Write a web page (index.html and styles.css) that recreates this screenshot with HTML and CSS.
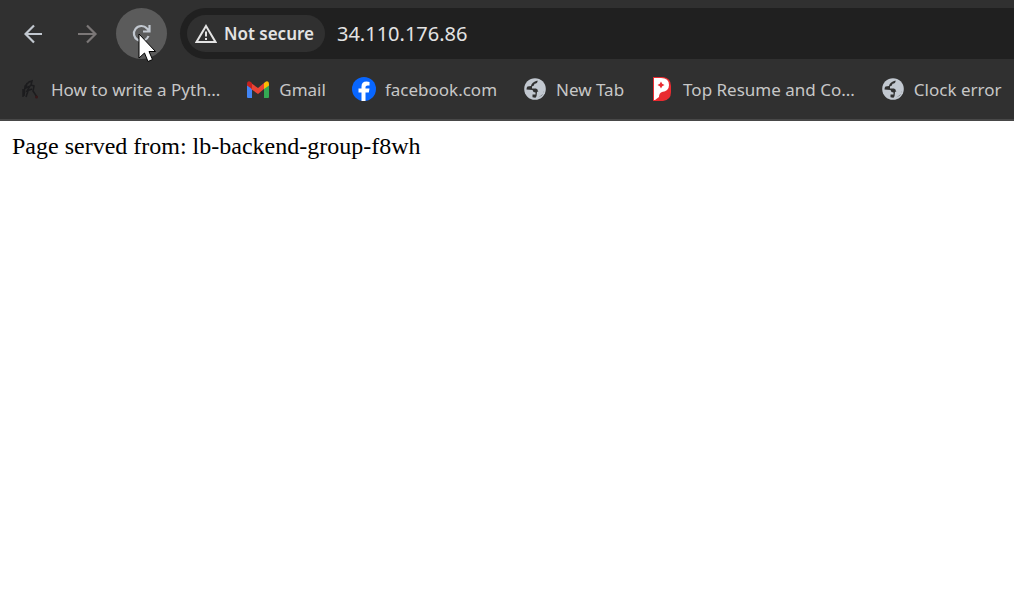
FILE: index.html
```html
<!DOCTYPE html>
<html lang="en">
<head>
    <meta charset="UTF-8">
    <meta name="viewport" content="width=device-width, initial-scale=1.0">
    <title>34.110.176.86</title>
    <link rel="stylesheet" href="styles.css">
</head>
<body>
    <header class="chrome">
        <div class="toolbar">
            <button type="button" class="nav-btn" aria-label="Back">
                <svg viewBox="0 0 20 20"><path d="M18 10H2M10 1.5L1.500 10L10 18.5"/></svg>
            </button>
            <button type="button" class="nav-btn nav-btn-muted" aria-label="Forward">
                <svg viewBox="0 0 20 20"><path d="M0 10H17M9 1.5L17.500 10L9 18.5"/></svg>
            </button>
            <button type="button" class="nav-btn nav-btn-hover" aria-label="Reload">
                <svg viewBox="0 0 20 20"><path d="M16.500 12A7.500 7.500 0 1 1 15 4.500L17.500 7M17.500 1V7.500H11"/></svg>
                <svg class="cursor" viewBox="0 0 20 30"><path d="M2 1V25L7.500 20L11 28.500L15.500 26.500L12 18.500H18.500Z"/></svg>
            </button>
            <div class="omnibox">
                <button type="button" class="chip">
                    <svg viewBox="0 0 22 20"><path d="M11 2L20.500 18H1.500Z"/><path d="M11 7.500V12.500M11 14V16"/></svg>
                    Not secure
                </button>
                <input type="text" class="address" aria-label="Address" value="34.110.176.86">
            </div>
        </div>
        <nav class="bookmarks">
            <a href="#" class="bookmark">
                <svg viewBox="0 0 24 24"><path d="M6 19L7 9L11 5L14 4L13 8L16 9L15 14L19 20M9 6L8 11L12 9L9 14L14 12M5 12V20M10 14L8 20" fill="none" stroke="#1c1c1e" stroke-width="1.500"/><circle cx="18.500" cy="20" r="1.500" fill="#351819"/></svg>
                <span>How to write a Pyth...</span>
            </a>
            <a href="#" class="bookmark">
                <svg viewBox="0 0 24 24">
                    <path d="M1 7L6 9V21H2Q1 21 1 20Z" fill="#4285f4"/>
                    <path d="M18 9L23 7V20Q23 21 22 21H18Z" fill="#34a853"/>
                    <path d="M18 6L20 4.500Q23 3.500 23 7V8.500L18 12Z" fill="#fbbc04"/>
                    <path d="M5 6L12 11L18 6V12L12 17L5 12Z" fill="#ea4335"/>
                    <path d="M1 8.500V7Q1 3.500 4 4.500L6 6V12Z" fill="#c5221f"/>
                </svg>
                <span>Gmail</span>
            </a>
            <a href="#" class="bookmark">
                <svg viewBox="0 0 24 24">
                    <circle cx="12" cy="12" r="12" fill="#0866ff"/>
                    <path d="M9.500 24V15.500H6.500V11.500H9.500V9.500Q9.500 4.500 14.500 4.500Q16.500 4.500 17.500 5V8.500H15.500Q13.500 8.500 13.500 10V11.500H17.500L16.800 15.500H13.500V24Z" fill="#fff"/>
                </svg>
                <span>facebook.com</span>
            </a>
            <a href="#" class="bookmark">
                <svg viewBox="0 0 24 24">
                    <circle cx="12" cy="12" r="10.800" fill="#c2c8d0"/>
                    <path d="M14.500 3.500Q15 6.500 11.500 6.800Q11.500 9 9 9.500V11.500H13Q15 12 15 14.500H20.500Q20 18 17 19.500Q13 21.500 9.500 20.300V17.500H12.500V15.500Q10 15.500 9.500 13L3.500 12.500Q3.500 10.500 4.500 9.500L8 9Q8.500 5 14.500 3.500Z" fill="#303030"/>
                    <path d="M14 15Q16.500 14.500 17 12H21L20 17L15 21H12.500Q14 19 14 15Z" fill="#c2c8d0"/>
                </svg>
                <span>New Tab</span>
            </a>
            <a href="#" class="bookmark">
                <svg viewBox="0 0 24 24">
                    <path d="M3 0H13Q21 1 21 9V15Q21 23 13 24H3Z" fill="#e92c31"/>
                    <path d="M4 1H11Q19 1 19 8Q19 14 12 15Q9 16 9 20L5 23H4Z" fill="#fff"/>
                    <path d="M11 4.500L12.200 6.800L14.500 8L12.200 9.200L11 11.500L9.800 9.200L7.500 8L9.800 6.800Z" fill="#e92c31"/>
                </svg>
                <span>Top Resume and Co...</span>
            </a>
            <a href="#" class="bookmark">
                <svg viewBox="0 0 24 24">
                    <circle cx="12" cy="12" r="10.800" fill="#c2c8d0"/>
                    <path d="M14.500 3.500Q15 6.500 11.500 6.800Q11.500 9 9 9.500V11.500H13Q15 12 15 14.500H20.500Q20 18 17 19.500Q13 21.500 9.500 20.300V17.500H12.500V15.500Q10 15.500 9.500 13L3.500 12.500Q3.500 10.500 4.500 9.500L8 9Q8.500 5 14.500 3.500Z" fill="#303030"/>
                    <path d="M14 15Q16.500 14.500 17 12H21L20 17L15 21H12.500Q14 19 14 15Z" fill="#c2c8d0"/>
                </svg>
                <span>Clock error</span>
            </a>
        </nav>
    </header>
    <main class="page">Page served from: lb-backend-group-f8wh</main>
</body>
</html>
```

FILE: styles.css
```css
:root { --chrome: #303030; --field: #202020; --text: #c7c7c7; --icon: #c2c8d0; --muted: #7b7777; }
* { box-sizing: border-box; }
body { margin: 0; min-height: 100vh; background: white; overflow-x: hidden; }
.chrome { background: var(--chrome); border-bottom: 2px solid #484848; font-family: "Segoe UI", "Noto Sans", sans-serif; }
.toolbar { display: flex; align-items: center; gap: 3px; padding: 8px 0 0 8px; }
.nav-btn { position: relative; display: flex; align-items: center; justify-content: center; width: 51px; height: 51px; padding: 0; border: none; border-radius: 50%; background: none; color: var(--icon); }
.nav-btn svg { width: 20px; height: 20px; fill: none; stroke: currentColor; stroke-width: 2.2; }
.nav-btn-muted { color: var(--muted); }
.nav-btn-hover { background: #5b5b5b; }
.nav-btn .cursor { position: absolute; left: 21px; top: 25px; width: 20px; height: 30px; fill: white; stroke: black; stroke-width: 1; }
.omnibox { flex: 1; display: flex; align-items: center; gap: 12px; height: 51px; margin-left: 10px; padding: 0 7px; border-radius: 26px 0 0 26px; background: var(--field); }
.chip { display: flex; align-items: center; gap: 7px; height: 37px; padding: 0 11px 0 8px; border: none; border-radius: 19px; background: var(--chrome); color: #e3e3e3; font: 600 17px "Segoe UI", "Noto Sans", sans-serif; white-space: nowrap; }
.chip svg { width: 22px; height: 20px; fill: none; stroke: currentColor; stroke-width: 2; }
.address { flex: 1; min-width: 0; padding: 0; border: none; outline: none; background: none; color: #e3e3e3; font: 20px "Segoe UI", "Noto Sans", sans-serif; }
.bookmarks { display: flex; gap: 26px; height: 60px; padding: 0 12px 0 18px; align-items: center; }
.bookmark { display: flex; align-items: center; gap: 9px; color: var(--text); font-size: 17px; text-decoration: none; white-space: nowrap; }
.bookmark svg { flex: none; width: 24px; height: 24px; }
.page { padding: 12px; font-family: "Liberation Serif", "Times New Roman", serif; font-size: 24px; line-height: 27px; color: black; }
```
